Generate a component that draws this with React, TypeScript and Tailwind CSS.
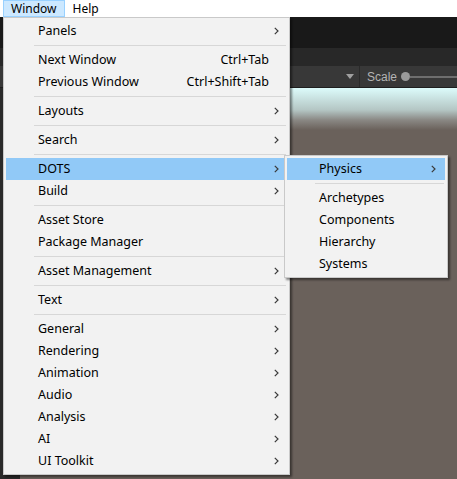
import React from "react";

const Chevron = () => (
  <svg width="5" height="8" viewBox="0 0 5 8" className="shrink-0">
    <polyline points="0.8,0.8 4,4 0.8,7.2" fill="none" stroke="#3a3a3a" strokeWidth="1.2" />
  </svg>
);

type Entry = { label?: string; shortcut?: string; sub?: boolean; sep?: boolean; active?: boolean };

const mainItems: Entry[] = [
  { label: "Panels", sub: true },
  { sep: true },
  { label: "Next Window", shortcut: "Ctrl+Tab" },
  { label: "Previous Window", shortcut: "Ctrl+Shift+Tab" },
  { sep: true },
  { label: "Layouts", sub: true },
  { sep: true },
  { label: "Search", sub: true },
  { sep: true },
  { label: "DOTS", sub: true, active: true },
  { label: "Build", sub: true },
  { sep: true },
  { label: "Asset Store" },
  { label: "Package Manager" },
  { sep: true },
  { label: "Asset Management", sub: true },
  { sep: true },
  { label: "Text", sub: true },
  { sep: true },
  { label: "General", sub: true },
  { label: "Rendering", sub: true },
  { label: "Animation", sub: true },
  { label: "Audio", sub: true },
  { label: "Analysis", sub: true },
  { label: "AI", sub: true },
  { label: "UI Toolkit", sub: true },
];

const subItems: Entry[] = [
  { label: "Physics", sub: true, active: true },
  { sep: true },
  { label: "Archetypes" },
  { label: "Components" },
  { label: "Hierarchy" },
  { label: "Systems" },
];

function MenuList({ items, chevPr }: { items: Entry[]; chevPr: string }) {
  return (
    <>
      {items.map((it, i) =>
        it.sep ? (
          <div key={i} className="h-[7px] flex items-center pl-[28px] pr-[1px]">
            <div className="h-px w-full bg-[#d7d7d7]" />
          </div>
        ) : (
          <div
            key={i}
            className={`h-[22px] flex items-center pl-[32px] ${chevPr} ${it.active ? "bg-[#91c9f7]" : ""}`}
          >
            <span className="flex-1 leading-none">{it.label}</span>
            {it.shortcut && <span className="leading-none mr-[10px]">{it.shortcut}</span>}
            {it.sub && <Chevron />}
          </div>
        )
      )}
    </>
  );
}

export default function App() {
  return (
    <div
      className="relative w-[457px] h-[479px] overflow-hidden bg-[#282828] text-black"
      style={{ fontFamily: '"Noto Sans", "Open Sans", sans-serif' }}
    >
      {/* menu bar */}
      <div className="h-[17px] bg-white flex items-stretch pl-[3px] text-[12px]">
        <div className="px-[7px] flex items-center border border-[#99d1ff] bg-[#cce8ff] leading-none">Window</div>
        <div className="px-[7px] flex items-center border border-transparent leading-none">Help</div>
      </div>

      {/* editor background */}
      <div className="h-[31px] bg-[#191919]" />
      <div className="h-[18px] bg-[#282828]" />
      <div className="h-[21px] bg-[#383838] flex items-center text-[12px] text-[#b4b4b4]">
        <div className="w-[346px]" />
        <svg width="8" height="5" viewBox="0 0 8 5">
          <polygon points="0,0 8,0 4,5" fill="#a0a0a0" />
        </svg>
        <div className="w-px h-full bg-[#2a2a2a] ml-[5px] mr-[7px]" />
        <span className="leading-none" style={{ fontFamily: '"Liberation Sans", Arial, sans-serif' }}>
          Scale
        </span>
        <div className="w-[9px] h-[9px] rounded-full bg-[#9a9a9a] ml-[4px] shrink-0" />
        <div className="flex-1 h-[2px] bg-[#6e6e6e]" />
      </div>
      <div className="h-px bg-[#1e1e1e]" />
      <div className="flex h-[391px]">
        <div className="w-[20px] bg-[#2a2a2a]" />
        <div className="flex-1 bg-[linear-gradient(to_bottom,#dcfbfb_0px,#b4c6c4_22px,#8a8884_32px,#6a615b_42px)]" />
      </div>

      {/* main dropdown */}
      <div className="absolute left-[3px] top-[17px] w-[287px] border border-[#c9c9c9] bg-[#f2f2f2] p-[2px] text-[12.5px] shadow-[2px_2px_2px_rgba(0,0,0,0.45)]">
        <MenuList items={mainItems} chevPr="pr-[8px]" />
      </div>

      {/* DOTS submenu */}
      <div className="absolute left-[284px] top-[155px] w-[164px] border border-[#c9c9c9] bg-[#f2f2f2] p-[2px] text-[12.5px] shadow-[2px_2px_2px_rgba(0,0,0,0.45)]">
        <MenuList items={subItems} chevPr="pr-[9px]" />
      </div>
    </div>
  );
}
